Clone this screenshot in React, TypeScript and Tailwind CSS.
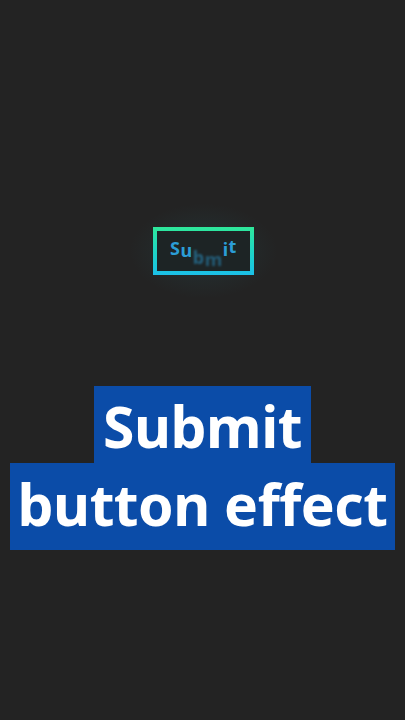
const letters = [
  { ch: 'S', y: '-translate-y-[3px]', fade: '' },
  { ch: 'u', y: '-translate-y-[1px]', fade: '' },
  { ch: 'b', y: 'translate-y-[6px]', fade: 'opacity-50 blur-[1px]' },
  { ch: 'm', y: 'translate-y-[8px]', fade: 'opacity-45 blur-[1px]' },
  { ch: 'i', y: '-translate-y-[2px]', fade: '' },
  { ch: 't', y: '-translate-y-[5px]', fade: '' },
];

function SubmitButton() {
  return (
    <div className="relative">
      {/* soft halo behind the button */}
      <div className="absolute -inset-6 rounded-full bg-[radial-gradient(ellipse_at_center,rgba(40,120,130,0.18),transparent_70%)]" />
      <div className="relative w-[101px] h-[48px] p-[4px] bg-gradient-to-b from-[#2fe89a] to-[#1cc0e8]">
        <div className="w-full h-full bg-[#1d2425] flex items-center justify-center">
          <span className="flex text-[18px] font-bold text-[#2b9dd6] leading-none tracking-[0.5px]" style={{ fontFamily: '"Noto Sans", sans-serif' }}>
            {letters.map((l, i) => (
              <span key={i} className={`inline-block ${l.y} ${l.fade}`}>{l.ch}</span>
            ))}
          </span>
        </div>
      </div>
    </div>
  );
}

export default function App() {
  return (
    <div className="w-[405px] h-[720px] bg-[#232323] flex flex-col items-center overflow-hidden" style={{ fontFamily: '"Noto Sans", sans-serif' }}>
      <div className="mt-[227px] ml-[2px]">
        <SubmitButton />
      </div>

      <div className="mt-[111px] flex flex-col items-center text-white font-bold text-[57px] tracking-[-0.5px]">
        <span className="bg-[#0b4ca8] px-[9px] h-[77px] flex items-center pt-[4px]">Submit</span>
        <span className="bg-[#0b4ca8] px-[8px] h-[87px] flex items-center pb-[4px]">button effect</span>
      </div>
    </div>
  );
}
